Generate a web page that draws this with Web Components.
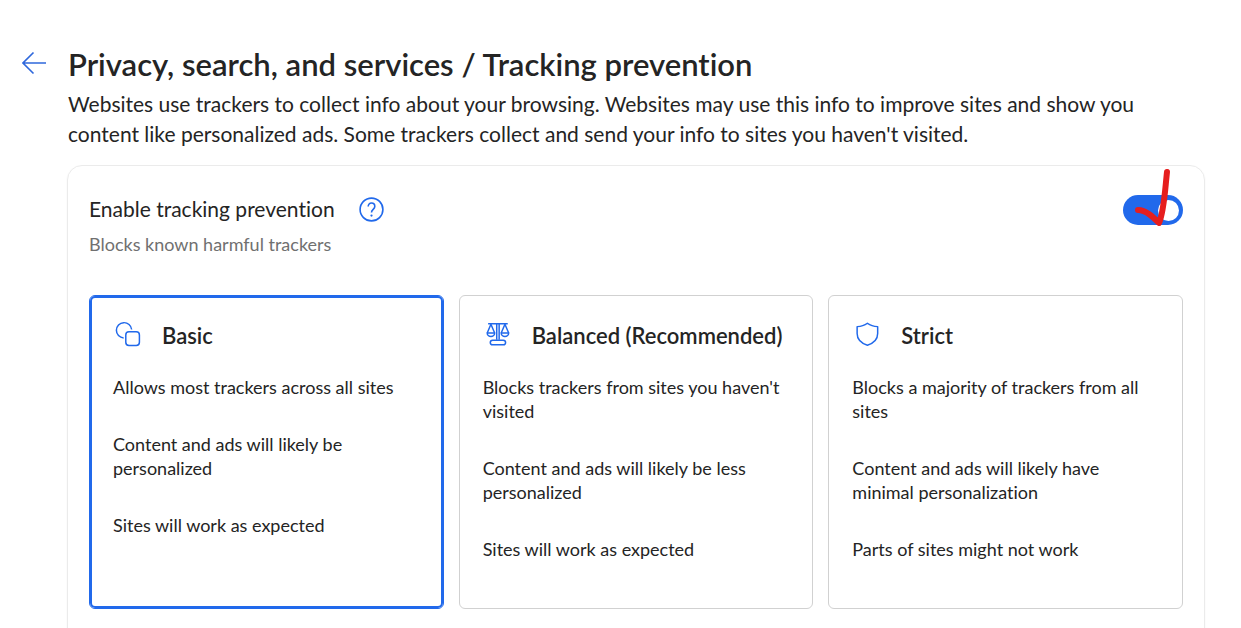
<!DOCTYPE html>
<html lang="en">
<head>
<meta charset="utf-8">
<meta name="viewport" content="width=device-width, initial-scale=1">
<title>Settings</title>
<style>
    body{
        margin:0;
        background:#fff;
        color:#242424;
        font-family:Lato, "Noto Sans", sans-serif;
        font-variant-ligatures:none;
    }
</style>
</head>
<body>
<settings-page>
    <span slot="section">Privacy, search, and services</span>
    <span slot="title">Tracking prevention</span>
    <span slot="description">Websites use trackers to collect info about your browsing. Websites may use this info to improve sites and show you content like personalized ads. Some trackers collect and send your info to sites you haven't visited.</span>
    <settings-panel>
        <toggle-row label="Enable tracking prevention" hint="Blocks known harmful trackers"></toggle-row>
        <level-group>
            <level-card icon="basic" label="Basic" checked>
                <p>Allows most trackers across all sites</p>
                <p>Content and ads will likely be personalized</p>
                <p>Sites will work as expected</p>
            </level-card>
            <level-card icon="balanced" label="Balanced (Recommended)">
                <p>Blocks trackers from sites you haven't visited</p>
                <p>Content and ads will likely be less personalized</p>
                <p>Sites will work as expected</p>
            </level-card>
            <level-card icon="strict" label="Strict">
                <p>Blocks a majority of trackers from all sites</p>
                <p>Content and ads will likely have minimal personalization</p>
                <p>Parts of sites might not work</p>
            </level-card>
        </level-group>
    </settings-panel>
</settings-page>

<script>
const ICONS = {
    basic: `
        <path d="M10.4 19.2A8.2 8.2 0 1 1 19 10.2"/>
        <rect x="12.7" y="12.7" width="14.6" height="14.6" rx="3.4"/>`,
    balanced: `
        <path d="M4.5 4H25.5M13.7 4V21.2M16.3 4V21.2"/>
        <path d="M7.5 4.5L3.5 14M7.5 4.5L11.5 14M22.5 4.5L18.5 14M22.5 4.5L26.5 14"/>
        <path d="M3.5 14H11.5A4 3.8 0 0 1 3.5 14ZM18.5 14H26.5A4 3.8 0 0 1 18.5 14Z"/>
        <rect x="6.8" y="21.6" width="16.4" height="5" rx="2.5"/>`,
    strict: `
        <path d="M15.5 3.5C18.5 5.8 22 7 26.5 7.1V14.5C26.5 20.5 22.2 24.9 15.5 27C8.8 24.9 4.5 20.5 4.5 14.5V7.1C9 7 12.5 5.8 15.5 3.5Z"/>`
};

class SettingsPage extends HTMLElement {
    constructor(){
        super();
        this.attachShadow({mode:'open'});
    }
    connectedCallback(){
        this.shadowRoot.innerHTML = `
        <style>
        :host{
            display:grid;
            grid-template-columns:24px minmax(0, 1fr);
            column-gap:21px;
            padding:44px 36px 0 22px;
        }
        .back{
            height:38px;
            padding:0;
            border:0;
            background:none;
            color:#2f68dc;
            cursor:pointer;
        }
        .back svg{
            display:block;
        }
        header{
            padding:0 1px;
        }
        h1{
            margin:0 0 5px;
            font-size:31px;
            line-height:40px;
            font-weight:600;
        }
        p{
            margin:0 0 16px;
            font-size:21px;
            line-height:30px;
        }
        </style>
        <button class="back" type="button" aria-label="Back">
            <svg width="24" height="24" viewBox="0 0 24 24" fill="none" stroke="currentColor" stroke-width="1.6">
                <path d="M24 12H1M11.5 1.5L1 12L11.5 22.5"/>
            </svg>
        </button>
        <main>
            <header>
                <h1><slot name="section"></slot> / <slot name="title"></slot></h1>
                <p><slot name="description"></slot></p>
            </header>
            <slot></slot>
        </main>`;
    }
}

class SettingsPanel extends HTMLElement {
    constructor(){
        super();
        this.attachShadow({mode:'open'});
    }
    connectedCallback(){
        this.shadowRoot.innerHTML = `
        <style>
        :host{
            display:block;
            padding:28px 21px 36px;
            border:1px solid #ebebeb;
            border-radius:15px;
            box-shadow:0 1px 2px rgba(0, 0, 0, .06);
        }
        </style>
        <slot></slot>`;
    }
}

class ToggleRow extends HTMLElement {
    constructor(){
        super();
        this.attachShadow({mode:'open'});
    }
    connectedCallback(){
        this.shadowRoot.innerHTML = `
        <style>
        :host{
            display:flex;
            justify-content:space-between;
            align-items:flex-start;
            margin-bottom:39px;
        }
        .name{
            display:flex;
            align-items:center;
            gap:24px;
            margin-bottom:8px;
            font-size:21px;
            line-height:30px;
        }
        .help{
            padding:0;
            border:0;
            background:none;
            color:#2169eb;
            cursor:pointer;
        }
        .help svg{
            display:block;
        }
        .hint{
            margin:0;
            color:#707070;
            font-size:18px;
            line-height:24px;
        }
        .switch{
            position:relative;
            margin-top:1px;
        }
        input{
            display:flex;
            align-items:center;
            box-sizing:border-box;
            width:60px;
            height:30px;
            margin:0;
            padding:0 4px;
            border-radius:15px;
            background:#8a8a8a;
            appearance:none;
            cursor:pointer;
        }
        input::before{
            content:"";
            width:21px;
            height:21px;
            border-radius:50%;
            background:#fff;
        }
        input:checked{
            justify-content:flex-end;
            background:#2169eb;
        }
        /* pen stroke over the switch */
        .mark{
            position:absolute;
            right:10px;
            bottom:-3px;
            pointer-events:none;
        }
        </style>
        <div>
            <div class="name">
                <label for="toggle">${this.getAttribute('label')}</label>
                <button class="help" type="button" aria-label="Help">
                    <svg width="25" height="25" viewBox="0 0 25 25" fill="none" stroke="currentColor" stroke-width="1.6">
                        <circle cx="12.5" cy="12.5" r="11.4"/>
                        <path d="M9.2 9.5C9.2 7.4 10.6 6 12.5 6S15.8 7.4 15.8 9.4C15.8 12.2 12.5 12.5 12.5 15.5"/>
                        <circle cx="12.5" cy="18.6" r="1.1" fill="currentColor" stroke="none"/>
                    </svg>
                </button>
            </div>
            <p class="hint" id="hint">${this.getAttribute('hint')}</p>
        </div>
        <div class="switch">
            <input type="checkbox" role="switch" id="toggle" aria-describedby="hint" checked>
            <svg class="mark" width="40" height="60" viewBox="0 0 40 60" fill="none" stroke="#e61e1e" stroke-width="6" stroke-linecap="round" stroke-linejoin="round">
                <path d="M34 4C32 22 31 44 26 55C20 49 13 42 5 42"/>
            </svg>
        </div>`;
    }
}

class LevelGroup extends HTMLElement {
    constructor(){
        super();
        this.attachShadow({mode:'open'});
    }
    connectedCallback(){
        this.setAttribute('role', 'radiogroup');
        this.shadowRoot.innerHTML = `
        <style>
        :host{
            display:grid;
            grid-template-columns:repeat(3, minmax(0, 1fr));
            gap:15px;
        }
        @media screen and (max-width:760px) {
            :host{
                grid-template-columns:1fr;
            }
        }
        </style>
        <slot></slot>`;
        // radios live in separate roots, so only one is kept on here
        this.addEventListener('level-change', (e) => {
            this.querySelectorAll('level-card').forEach((card) => {
                card.toggleAttribute('checked', card === e.target);
                card.shadowRoot.querySelector('input').checked = card === e.target;
            });
        });
    }
}

class LevelCard extends HTMLElement {
    constructor(){
        super();
        this.attachShadow({mode:'open'});
    }
    connectedCallback(){
        this.shadowRoot.innerHTML = `
        <style>
        :host{
            display:grid;
        }
        label{
            display:block;
            padding:24px 23px 47px;
            border:1px solid #d1d1d1;
            border-radius:6px;
            font-size:18px;
            line-height:24px;
            cursor:pointer;
        }
        :host([checked]) label{
            border-color:#2169eb;
            box-shadow:inset 0 0 0 2px #2169eb;
        }
        input{
            position:absolute;
            opacity:0;
        }
        .head{
            display:flex;
            align-items:flex-start;
            gap:21px;
            margin-bottom:23px;
            font-size:22px;
            line-height:32px;
            font-weight:600;
        }
        svg{
            flex:none;
            color:#2169eb;
        }
        ::slotted(p){
            margin:0 0 33px;
        }
        ::slotted(p:last-child){
            margin:0;
        }
        </style>
        <label>
            <input type="radio" name="level" ${this.hasAttribute('checked') ? 'checked' : ''}>
            <span class="head">
                <svg width="28" height="28" viewBox="-1 0 30 30" fill="none" stroke="currentColor" stroke-width="1.6" stroke-linejoin="round">${ICONS[this.getAttribute('icon')]}</svg>
                ${this.getAttribute('label')}
            </span>
            <slot></slot>
        </label>`;
        this.shadowRoot.querySelector('input').addEventListener('change', () => {
            this.dispatchEvent(new CustomEvent('level-change', {bubbles:true}));
        });
    }
}

customElements.define('settings-page', SettingsPage);
customElements.define('settings-panel', SettingsPanel);
customElements.define('toggle-row', ToggleRow);
customElements.define('level-group', LevelGroup);
customElements.define('level-card', LevelCard);
</script>
</body>
</html>
